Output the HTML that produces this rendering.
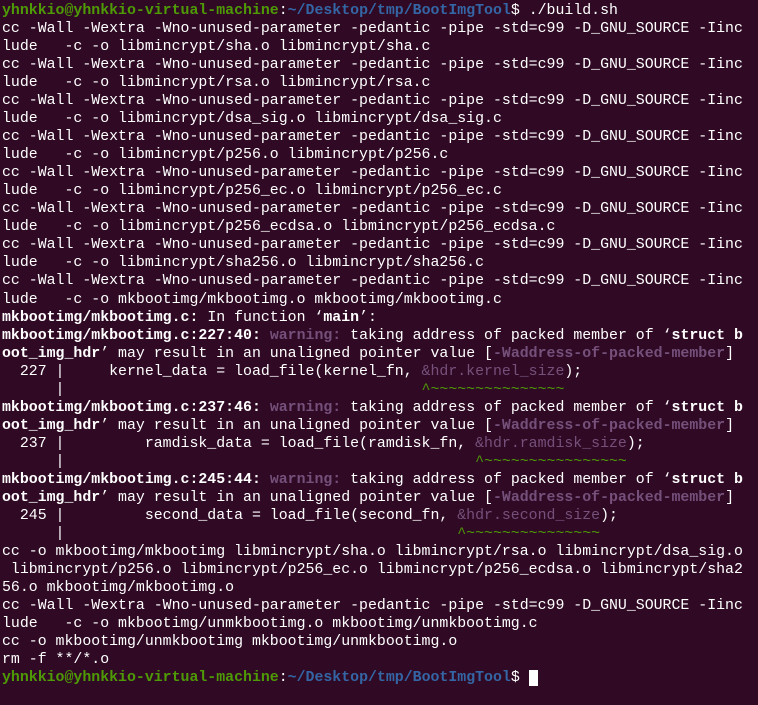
<!DOCTYPE html>
<html><head><meta charset="utf-8"><style>
html,body{margin:0;padding:0;background:#300a24;width:758px;height:705px;overflow:hidden}
pre{margin:0;padding:2px 0 0 2px;font-family:"Liberation Mono","DejaVu Sans Mono",monospace;font-size:14.88px;line-height:18.03px;color:#ffffff;white-space:pre}
.g{color:#4e9a06;font-weight:bold}.b{color:#3465a4;font-weight:bold}
.B{font-weight:bold}.w{color:#75507b;font-weight:bold}.m{color:#75507b}.gr{color:#4e9a06}
.cur{background:#fff;color:#fff}
</style></head><body><pre><span class="g">yhnkkio@yhnkkio-virtual-machine</span>:<span class="b">~/Desktop/tmp/BootImgTool</span>$ ./build.sh
cc -Wall -Wextra -Wno-unused-parameter -pedantic -pipe -std=c99 -D_GNU_SOURCE -Iinc
lude   -c -o libmincrypt/sha.o libmincrypt/sha.c
cc -Wall -Wextra -Wno-unused-parameter -pedantic -pipe -std=c99 -D_GNU_SOURCE -Iinc
lude   -c -o libmincrypt/rsa.o libmincrypt/rsa.c
cc -Wall -Wextra -Wno-unused-parameter -pedantic -pipe -std=c99 -D_GNU_SOURCE -Iinc
lude   -c -o libmincrypt/dsa_sig.o libmincrypt/dsa_sig.c
cc -Wall -Wextra -Wno-unused-parameter -pedantic -pipe -std=c99 -D_GNU_SOURCE -Iinc
lude   -c -o libmincrypt/p256.o libmincrypt/p256.c
cc -Wall -Wextra -Wno-unused-parameter -pedantic -pipe -std=c99 -D_GNU_SOURCE -Iinc
lude   -c -o libmincrypt/p256_ec.o libmincrypt/p256_ec.c
cc -Wall -Wextra -Wno-unused-parameter -pedantic -pipe -std=c99 -D_GNU_SOURCE -Iinc
lude   -c -o libmincrypt/p256_ecdsa.o libmincrypt/p256_ecdsa.c
cc -Wall -Wextra -Wno-unused-parameter -pedantic -pipe -std=c99 -D_GNU_SOURCE -Iinc
lude   -c -o libmincrypt/sha256.o libmincrypt/sha256.c
cc -Wall -Wextra -Wno-unused-parameter -pedantic -pipe -std=c99 -D_GNU_SOURCE -Iinc
lude   -c -o mkbootimg/mkbootimg.o mkbootimg/mkbootimg.c
<span class="B">mkbootimg/mkbootimg.c:</span> In function ‘<span class="B">main</span>’:
<span class="B">mkbootimg/mkbootimg.c:227:40:</span> <span class="w">warning: </span>taking address of packed member of ‘<span class="B">struct b</span>
<span class="B">oot_img_hdr</span>’ may result in an unaligned pointer value [<span class="w">-Waddress-of-packed-member</span>]
  227 |     kernel_data = load_file(kernel_fn, <span class="m">&amp;hdr.kernel_size</span>);
      |                                        <span class="gr">^~~~~~~~~~~~~~~~</span>
<span class="B">mkbootimg/mkbootimg.c:237:46:</span> <span class="w">warning: </span>taking address of packed member of ‘<span class="B">struct b</span>
<span class="B">oot_img_hdr</span>’ may result in an unaligned pointer value [<span class="w">-Waddress-of-packed-member</span>]
  237 |         ramdisk_data = load_file(ramdisk_fn, <span class="m">&amp;hdr.ramdisk_size</span>);
      |                                              <span class="gr">^~~~~~~~~~~~~~~~~</span>
<span class="B">mkbootimg/mkbootimg.c:245:44:</span> <span class="w">warning: </span>taking address of packed member of ‘<span class="B">struct b</span>
<span class="B">oot_img_hdr</span>’ may result in an unaligned pointer value [<span class="w">-Waddress-of-packed-member</span>]
  245 |         second_data = load_file(second_fn, <span class="m">&amp;hdr.second_size</span>);
      |                                            <span class="gr">^~~~~~~~~~~~~~~~</span>
cc -o mkbootimg/mkbootimg libmincrypt/sha.o libmincrypt/rsa.o libmincrypt/dsa_sig.o
 libmincrypt/p256.o libmincrypt/p256_ec.o libmincrypt/p256_ecdsa.o libmincrypt/sha2
56.o mkbootimg/mkbootimg.o
cc -Wall -Wextra -Wno-unused-parameter -pedantic -pipe -std=c99 -D_GNU_SOURCE -Iinc
lude   -c -o mkbootimg/unmkbootimg.o mkbootimg/unmkbootimg.c
cc -o mkbootimg/unmkbootimg mkbootimg/unmkbootimg.o
rm -f **/*.o
<span class="g">yhnkkio@yhnkkio-virtual-machine</span>:<span class="b">~/Desktop/tmp/BootImgTool</span>$ <span class="cur"> </span></pre></body></html>
